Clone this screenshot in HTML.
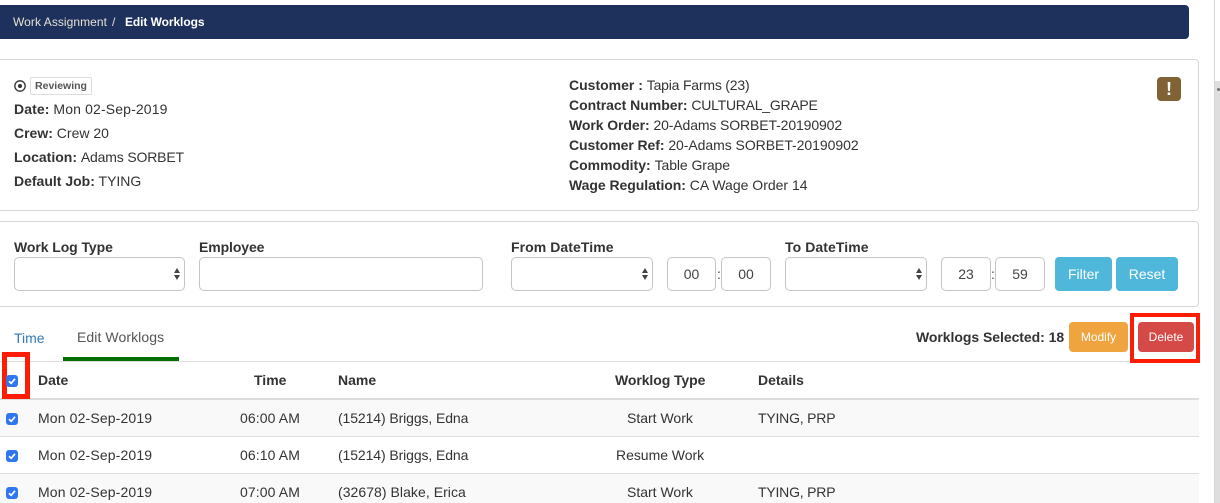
<!DOCTYPE html>
<html><head><meta charset="utf-8"><style>
html,body{margin:0;padding:0;background:#fff}
body{width:1220px;height:503px;overflow:hidden;position:relative;font-family:"Liberation Sans",sans-serif;font-size:14px;color:#333}
.a{position:absolute;white-space:nowrap;line-height:20px}
.b{position:absolute;box-sizing:border-box}
.panel{border:1px solid #d6d6d6;border-radius:4px;background:#fff}
.in{border:1px solid #c4c4c4;border-radius:5px;background:#fff;text-align:center;line-height:32px;color:#444}
.sel:after{content:"";position:absolute;right:4px;top:10px;border:3.5px solid transparent;border-top:0;border-bottom:5px solid #444}
.sel:before{content:"";position:absolute;right:4px;top:17px;border:3.5px solid transparent;border-bottom:0;border-top:5px solid #444}
.btn{color:#fff;text-align:center;border-radius:4px}
.cb{position:absolute;left:6px;width:12px;height:12px;background:#2f77ee;border-radius:3px}
.cb svg{position:absolute;left:0;top:0}
.d{letter-spacing:.14px}
.t{letter-spacing:.1px}
.n{letter-spacing:-.1px}
b{font-weight:bold}
</style></head><body>
<div class="b" style="left:-4px;top:5px;width:1193px;height:34px;background:#1d315c;border-radius:4px"></div>
<div class="a" style="left:13px;top:12px;font-size:12px;color:#e6e2d2;letter-spacing:.06px">Work Assignment</div>
<div class="a" style="left:112px;top:12px;font-size:12px;color:#e6e2d2">/</div>
<div class="a" style="left:125px;top:12px;font-size:12px;color:#fff;font-weight:bold;letter-spacing:-.08px">Edit Worklogs</div>

<div class="b" style="left:1214px;top:0;width:1px;height:503px;background:#d8d8d8"></div>
<div class="b" style="left:1215px;top:81px;width:5px;height:422px;background:#dedede"></div>
<div class="b" style="left:1217px;top:88px;width:3px;height:3px;background:#777;border-radius:2px"></div>

<div class="b panel" style="left:-5px;top:59px;width:1204px;height:152px"></div>
<svg class="b" style="left:14px;top:80px" width="12" height="12"><circle cx="6" cy="6" r="5.2" fill="none" stroke="#333" stroke-width="1.3"/><circle cx="6" cy="6" r="2" fill="#333"/></svg>
<div class="b" style="left:30px;top:77px;width:62px;height:18px;border:1px solid #ddd;border-radius:2px;font-size:10.5px;line-height:17px;text-align:center;color:#555;font-weight:bold">Reviewing</div>
<div class="a" style="left:14px;top:99px"><b style="letter-spacing:.1px">Date:</b> <span class="d">Mon 02-Sep-2019</span></div>
<div class="a" style="left:14px;top:123px"><b>Crew:</b> Crew 20</div>
<div class="a" style="left:14px;top:147px"><b>Location:</b> <span style="letter-spacing:-.17px">Adams SORBET</span></div>
<div class="a" style="left:14px;top:171px"><b>Default Job:</b> TYING</div>

<div class="a" style="left:569px;top:75px"><b>Customer :</b> <span style="letter-spacing:-.2px">Tapia Farms (23)</span></div>
<div class="a" style="left:569px;top:95px"><b style="letter-spacing:-.03px">Contract Number:</b> <span style="letter-spacing:-.25px">CULTURAL_GRAPE</span></div>
<div class="a" style="left:569px;top:115px"><b style="letter-spacing:-.08px">Work Order:</b> <span style="letter-spacing:-.12px">20-Adams SORBET-20190902</span></div>
<div class="a" style="left:569px;top:135px"><b style="letter-spacing:-.08px">Customer Ref:</b> <span style="letter-spacing:-.05px">20-Adams SORBET-20190902</span></div>
<div class="a" style="left:569px;top:155px"><b>Commodity:</b> <span style="letter-spacing:-.08px">Table Grape</span></div>
<div class="a" style="left:569px;top:175px"><b style="letter-spacing:-.05px">Wage Regulation:</b> CA Wage Order 14</div>
<div class="b" style="left:1157px;top:77px;width:24px;height:24px;background:#806234;border-radius:4px;color:#fff;font-weight:bold;font-size:18px;line-height:24px;text-align:center">!</div>

<div class="b panel" style="left:-5px;top:221px;width:1204px;height:86px"></div>
<div class="a" style="left:14px;top:237px"><b style="letter-spacing:-.08px">Work Log Type</b></div>
<div class="a" style="left:199px;top:237px"><b style="letter-spacing:-.1px">Employee</b></div>
<div class="a" style="left:511px;top:237px"><b style="letter-spacing:.07px">From DateTime</b></div>
<div class="a" style="left:785px;top:237px"><b style="letter-spacing:.08px">To DateTime</b></div>

<div class="b in sel" style="left:14px;top:257px;width:171px;height:34px"></div>
<div class="b in" style="left:199px;top:257px;width:284px;height:34px"></div>
<div class="b in sel" style="left:511px;top:257px;width:142px;height:34px"></div>
<div class="b in" style="left:667px;top:257px;width:49px;height:34px">00</div>
<div class="b in" style="left:721px;top:257px;width:50px;height:34px">00</div>
<div class="a" style="left:717px;top:264px;color:#444">:</div>
<div class="b in sel" style="left:785px;top:257px;width:142px;height:34px"></div>
<div class="b in" style="left:941px;top:257px;width:50px;height:34px">23</div>
<div class="b in" style="left:995px;top:257px;width:50px;height:34px">59</div>
<div class="a" style="left:991px;top:264px;color:#444">:</div>
<div class="b btn" style="left:1055px;top:257px;width:57px;height:34px;background:#4fb7d9;line-height:34px">Filter</div>
<div class="b btn" style="left:1116px;top:257px;width:62px;height:34px;background:#4fb7d9;line-height:34px">Reset</div>

<div class="a" style="left:14px;top:328px;color:#337ab7">Time</div>
<div class="a" style="left:77px;top:327px;color:#555;letter-spacing:.08px">Edit Worklogs</div>
<div class="b" style="left:63px;top:357px;width:116px;height:5px;background:#046f04"></div>
<div class="b" style="left:0;top:361px;width:1199px;height:1px;background:#ddd"></div>

<div class="a" style="left:916px;top:327px"><b style="letter-spacing:-.05px">Worklogs Selected: 18</b></div>
<div class="b btn" style="left:1069px;top:322px;width:59px;height:30px;background:#f0a43f;font-size:12px;line-height:30px">Modify</div>
<div class="b" style="left:1130px;top:313px;width:70px;height:50px;border:4px solid #fd1d04"></div>
<div class="b btn" style="left:1138px;top:322px;width:56px;height:30px;background:#d54a47;font-size:12px;line-height:30px">Delete</div>

<div class="a" style="left:38px;top:370px"><b>Date</b></div>
<div class="a" style="left:254px;top:370px"><b>Time</b></div>
<div class="a" style="left:338px;top:370px"><b>Name</b></div>
<div class="a" style="left:615px;top:370px"><b style="letter-spacing:-.08px">Worklog Type</b></div>
<div class="a" style="left:758px;top:370px"><b>Details</b></div>
<div class="b" style="left:0;top:398px;width:1199px;height:2px;background:#ddd"></div>

<div class="b" style="left:0;top:400px;width:1199px;height:36px;background:#f9f9f9"></div>
<div class="b" style="left:0;top:436px;width:1199px;height:1px;background:#ddd"></div>
<div class="b" style="left:0;top:473px;width:1199px;height:1px;background:#ddd"></div>
<div class="b" style="left:0;top:474px;width:1199px;height:29px;background:#f9f9f9"></div>

<div class="b" style="left:2px;top:352px;width:28px;height:47px;border:5px solid #fd1d04"></div>

<div class="cb" style="top:375px"><svg width="12" height="12"><path d="M3 6.2 5.2 8.3 9 3.8" fill="none" stroke="#fff" stroke-width="1.7"/></svg></div>
<div class="cb" style="top:413px"><svg width="12" height="12"><path d="M3 6.2 5.2 8.3 9 3.8" fill="none" stroke="#fff" stroke-width="1.7"/></svg></div>
<div class="cb" style="top:450px"><svg width="12" height="12"><path d="M3 6.2 5.2 8.3 9 3.8" fill="none" stroke="#fff" stroke-width="1.7"/></svg></div>
<div class="cb" style="top:487px"><svg width="12" height="12"><path d="M3 6.2 5.2 8.3 9 3.8" fill="none" stroke="#fff" stroke-width="1.7"/></svg></div>

<div class="a d" style="left:38px;top:408px">Mon 02-Sep-2019</div>
<div class="a t" style="left:240px;top:408px">06:00 AM</div>
<div class="a n" style="left:338px;top:408px">(15214) Briggs, Edna</div>
<div class="a" style="left:627px;top:408px">Start Work</div>
<div class="a" style="left:758px;top:408px;letter-spacing:-.2px">TYING, PRP</div>

<div class="a d" style="left:38px;top:445px">Mon 02-Sep-2019</div>
<div class="a t" style="left:240px;top:445px">06:10 AM</div>
<div class="a n" style="left:338px;top:445px">(15214) Briggs, Edna</div>
<div class="a" style="left:616px;top:445px;letter-spacing:-.03px">Resume Work</div>

<div class="a d" style="left:38px;top:482px">Mon 02-Sep-2019</div>
<div class="a t" style="left:240px;top:482px">07:00 AM</div>
<div class="a" style="left:338px;top:482px;letter-spacing:.05px">(32678) Blake, Erica</div>
<div class="a" style="left:627px;top:482px">Start Work</div>
<div class="a" style="left:758px;top:482px;letter-spacing:-.2px">TYING, PRP</div>
</body></html>
